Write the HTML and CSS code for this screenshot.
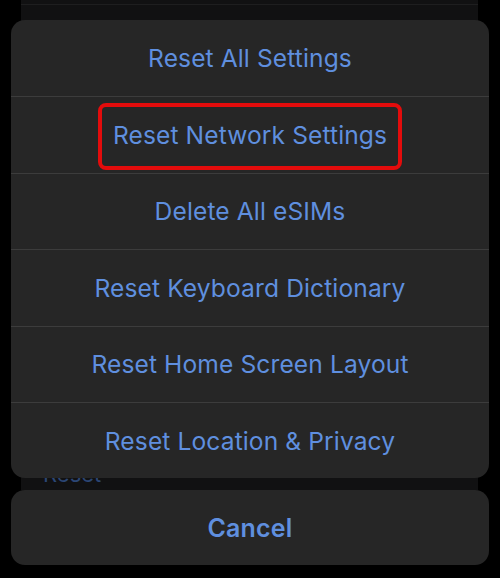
FILE: index.html
```html
<!DOCTYPE html>
<html lang="en">
<head>
  <meta charset="UTF-8" />
  <meta name="viewport" content="width=device-width, initial-scale=1" />
  <title>Reset</title>
  <link rel="stylesheet" href="styles.css">
</head>
<body>

  <!-- page underneath the sheet -->
  <div class="page">
    <div class="page-line"></div>
    <div class="page-link">Reset</div>
  </div>

  <div class="sheet-wrap">
    <div class="sheet">
      <div class="row">Reset All Settings</div>
      <div class="row highlighted">
        Reset Network Settings
        <span class="mark"></span>
      </div>
      <div class="row">Delete All eSIMs</div>
      <div class="row">Reset Keyboard Dictionary</div>
      <div class="row">Reset Home Screen Layout</div>
      <div class="row">Reset Location &amp; Privacy</div>
    </div>
    <div class="cancel">Cancel</div>
  </div>

</body>
</html>
```

FILE: styles.css
```css
:root {
  --fundo: #000;
  --painel: #262626;
  --azul: #5f8fdf;
  --linha: #3c3c3c;
}

* {
  box-sizing: border-box;
  margin: 0;
  padding: 0;
  font-family: 'Inter', 'Liberation Sans', sans-serif;
}

body {
  background-color: var(--fundo);
  width: 500px;
  height: 578px;
  overflow: hidden;
  position: relative;
}

.page {
  margin: 0 22px 0 21px;
  height: 490px;
  background-color: #111112;
  padding-top: 4px;
  display: flex;
  flex-direction: column;
}

.page-line {
  height: 1px;
  background-color: #1e1e1f;
}

.page-link {
  margin-top: auto;
  padding-left: 22px;
  margin-bottom: 4px;
  color: #2b4675;
  font-size: 22px;
  line-height: 24px;
}

.sheet-wrap {
  position: absolute;
  top: 20px;
  left: 11px;
  right: 11px;
  display: flex;
  flex-direction: column;
  gap: 12px;
}

.sheet {
  background-color: var(--painel);
  border-radius: 14px;
  overflow: hidden;
}

.row {
  height: 76.4px;
  display: flex;
  align-items: center;
  justify-content: center;
  color: var(--azul);
  font-size: 24.6px;
  letter-spacing: 0.1px;
  border-top: 1px solid var(--linha);
  position: relative;
}

.row:first-child {
  border-top: none;
}

.mark {
  position: absolute;
  left: 87px;
  top: 6px;
  width: 304px;
  height: 67px;
  border: 4px solid #e30c0c;
  border-radius: 8px;
}

.cancel {
  height: 75px;
  background-color: var(--painel);
  border-radius: 14px;
  display: flex;
  align-items: center;
  justify-content: center;
  color: var(--azul);
  font-size: 25px;
  font-weight: 600;
  letter-spacing: 0.2px;
}
```
